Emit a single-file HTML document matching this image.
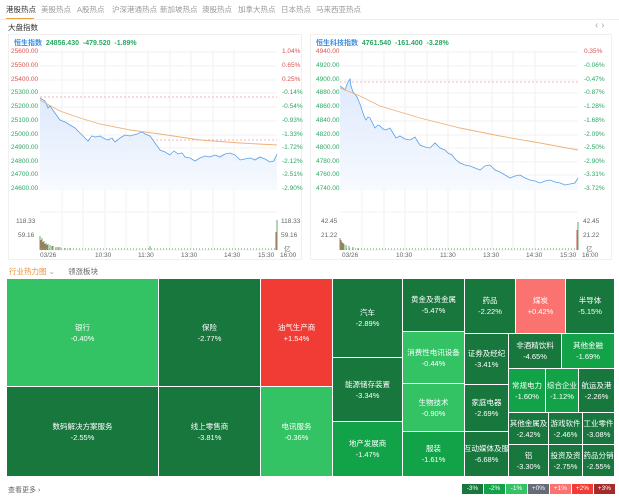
<!DOCTYPE html>
<html><head><meta charset="utf-8"><style>
*{margin:0;padding:0;box-sizing:border-box}
body{width:619px;height:500px;background:#fff;font-family:"Liberation Sans","Noto Sans CJK SC",sans-serif;position:relative;overflow:hidden;font-size:7px;color:#333}
.a{position:absolute;white-space:nowrap}
.nav span{position:absolute;top:4px;font-size:7.5px;color:#999}
.t{position:absolute;display:flex;flex-direction:column;align-items:center;justify-content:center;color:#fff;font-size:7.5px;line-height:11px;text-align:center;border-right:1px solid #fff;border-bottom:1px solid #fff;overflow:hidden;white-space:nowrap}
.D{background:#17773d}.M{background:#12a348}.L{background:#33c264}.R{background:#f03c34}.P{background:#fa7371}
.g{color:#2aa862}.r{color:#d9534f}.lbl{font-size:6.5px}
</style></head><body>
<div class="nav">
<span style="left:6px;color:#333">港股热点</span><span style="left:41px">美股热点</span><span style="left:77px">A股热点</span><span style="left:112px">沪深港通热点</span><span style="left:160px">新加坡热点</span><span style="left:202px">澳股热点</span><span style="left:238px">加拿大热点</span><span style="left:281px">日本热点</span><span style="left:316px">马来西亚热点</span>
</div>
<div class="a" style="left:6px;top:18px;width:28px;height:1px;background:#e8a040"></div>
<div class="a" style="left:0;top:19px;width:619px;height:1px;background:#eee"></div>
<div class="a" style="left:8px;top:22px;font-size:7.5px">大盘指数</div>
<div class="a" style="left:595px;top:20px;font-size:10px;color:#aaa">‹ ›</div>
<div class="a" style="left:8px;top:34px;width:294px;height:226px;border:1px solid #f0f0f0"></div>
<div class="a" style="left:310px;top:34px;width:302px;height:226px;border:1px solid #f0f0f0"></div>
<div class="a" style="left:14px;top:38px;font-size:7px;font-weight:bold"><span style="color:#3a8ee6">恒生指数</span> <span class="g">&nbsp;24856.430 &nbsp;-479.520 &nbsp;-1.89%</span></div>
<div class="a" style="left:316px;top:38px;font-size:7px;font-weight:bold"><span style="color:#3a8ee6">恒生科技指数</span> <span class="g">&nbsp;4761.540 &nbsp;-161.400 &nbsp;-3.28%</span></div>
<svg class="a" style="left:0;top:0" width="619" height="270">
<defs><linearGradient id="gr" x1="0" y1="0" x2="0" y2="1"><stop offset="0" stop-color="#dde9fb"/><stop offset="1" stop-color="#f7faff"/></linearGradient></defs>
<g stroke="#f2f2f2" stroke-width="1">
<path d="M40 52H277M40 66H277M40 80H277M40 93H277M40 107H277M40 121H277M40 135H277M40 148H277M40 162H277M40 175H277M40 189H277M40 212H277M40 250H277"/>
<path d="M62 50V250M83 50V250M105 50V250M126 50V250M148 50V250M170 50V250M191 50V250M213 50V250M234 50V250"/>
<path d="M340 52H578M340 66H578M340 80H578M340 93H578M340 107H578M340 121H578M340 135H578M340 148H578M340 162H578M340 175H578M340 189H578M340 212H578M340 250H578"/>
<path d="M362 50V250M384 50V250M405 50V250M427 50V250M448 50V250M470 50V250M492 50V250M513 50V250M535 50V250"/>
</g>
<path d="M40 97H277M40 140H277" stroke="#f0a0a0" stroke-dasharray="2,2" stroke-width=".7"/>
<path d="M40 98L50 106L60 120L70 125L80 133L88 141L95 137L100 136L108 140L115 142L120 138L125 135L137 134L145 134L150 136L155 143L160 150L170 155L178 154L185 157L195 161L205 156L215 155L230 153L240 160L250 158L260 157L270 162L277 154V189H40Z" fill="url(#gr)" stroke="none"/>
<polyline fill="none" stroke="#5aa0e8" stroke-width=".8" points="40,98 45,101 48,108 50,106 55,113 60,120 65,122 70,125 75,128 80,133 85,138 88,141 92,136 95,137 100,136 105,139 108,140 112,138 115,142 120,138 125,135 130,136 137,134 142,132 145,134 150,136 153,140 155,143 160,150 165,152 170,155 174,151 178,154 182,153 185,157 190,158 195,161 200,158 205,156 210,157 215,155 220,157 225,154 230,153 235,155 240,160 245,159 250,158 255,160 260,157 265,159 270,162 274,161 277,154"/>
<polyline fill="none" stroke="#eeb27a" stroke-width=".9" points="40,100 60,111 80,118 100,124 130,130 160,134 200,140 240,143 277,145"/>
<path d="M340 82H578" stroke="#f0a0a0" stroke-dasharray="2,2" stroke-width=".7"/>
<path d="M340 86L345 90L348 82L350 79L353 92L357 97L362 110L366 120L370 118L375 128L380 126L386 130L390 128L396 138L400 136L410 140L415 137L420 145L430 148L435 143L445 150L452 155L460 163L470 166L480 170L490 165L500 172L510 178L520 175L530 180L540 183L550 180L560 183L570 184L578 178V189H340Z" fill="url(#gr)" stroke="none"/>
<polyline fill="none" stroke="#5aa0e8" stroke-width=".8" points="340,86 343,88 345,90 347,84 348,82 350,79 351,86 353,92 355,94 357,97 360,104 362,110 364,116 366,120 368,117 370,118 373,124 375,128 378,125 380,126 383,129 386,130 390,128 393,133 396,138 400,136 405,139 410,140 415,137 418,142 420,145 425,147 430,148 435,143 440,148 445,150 448,153 452,155 456,160 460,163 465,165 470,166 475,168 480,170 485,166 490,165 495,170 500,172 505,175 510,178 515,176 520,175 525,178 530,180 535,181 540,183 545,181 550,180 555,182 560,183 565,185 570,184 575,183 578,178"/>
<polyline fill="none" stroke="#eeb27a" stroke-width=".9" points="340,88 360,96 380,106 420,118 460,128 500,136 540,143 578,150"/>
<path d="M40 250V236M42 250V238M44 250V241M46 250V243M48 250V244M50 250V245M53 250V246M56 250V247M60 250V247M65 250V248M70 250V248M150 250V246M277 250V220" stroke="#6a6" stroke-width="1"/>
<path d="M41 250V240M43 250V242M45 250V244M47 250V245M52 250V246M58 250V247M276 250V232" stroke="#c55" stroke-width="1"/>
<path d="M40 249H277M340 249H578" stroke="#7b7" stroke-width="1.2" stroke-dasharray="1,2"/>
<path d="M340 250V238M342 250V242M344 250V244M346 250V245M349 250V246M353 250V247M358 250V248M578 250V222" stroke="#6a6" stroke-width="1"/>
<path d="M341 250V240M343 250V243M577 250V230" stroke="#c55" stroke-width="1"/>
</svg>
<div class="lbl">
<div class="a r" style="left:11px;top:48px">25600.00</div><div class="a r" style="left:11px;top:62px">25500.00</div><div class="a r" style="left:11px;top:76px">25400.00</div>
<div class="a g" style="left:11px;top:89px">25300.00</div><div class="a g" style="left:11px;top:103px">25200.00</div><div class="a g" style="left:11px;top:117px">25100.00</div><div class="a g" style="left:11px;top:131px">25000.00</div><div class="a g" style="left:11px;top:144px">24900.00</div><div class="a g" style="left:11px;top:158px">24800.00</div><div class="a g" style="left:11px;top:171px">24700.00</div><div class="a g" style="left:11px;top:185px">24600.00</div>
<div class="a r" style="left:282px;top:48px">1.04%</div><div class="a r" style="left:282px;top:62px">0.65%</div><div class="a r" style="left:282px;top:76px">0.25%</div>
<div class="a g" style="left:282px;top:89px">-0.14%</div><div class="a g" style="left:282px;top:103px">-0.54%</div><div class="a g" style="left:282px;top:117px">-0.93%</div><div class="a g" style="left:282px;top:131px">-1.33%</div><div class="a g" style="left:282px;top:144px">-1.72%</div><div class="a g" style="left:282px;top:158px">-2.12%</div><div class="a g" style="left:282px;top:171px">-2.51%</div><div class="a g" style="left:282px;top:185px">-2.90%</div>
<div class="a r" style="left:316px;top:48px">4940.00</div><div class="a g" style="left:316px;top:62px">4920.00</div><div class="a g" style="left:316px;top:76px">4900.00</div><div class="a g" style="left:316px;top:89px">4880.00</div><div class="a g" style="left:316px;top:103px">4860.00</div><div class="a g" style="left:316px;top:117px">4840.00</div><div class="a g" style="left:316px;top:131px">4820.00</div><div class="a g" style="left:316px;top:144px">4800.00</div><div class="a g" style="left:316px;top:158px">4780.00</div><div class="a g" style="left:316px;top:171px">4760.00</div><div class="a g" style="left:316px;top:185px">4740.00</div>
<div class="a r" style="left:584px;top:48px">0.35%</div><div class="a g" style="left:584px;top:62px">-0.06%</div><div class="a g" style="left:584px;top:76px">-0.47%</div><div class="a g" style="left:584px;top:89px">-0.87%</div><div class="a g" style="left:584px;top:103px">-1.28%</div><div class="a g" style="left:584px;top:117px">-1.68%</div><div class="a g" style="left:584px;top:131px">-2.09%</div><div class="a g" style="left:584px;top:144px">-2.50%</div><div class="a g" style="left:584px;top:158px">-2.90%</div><div class="a g" style="left:584px;top:171px">-3.31%</div><div class="a g" style="left:584px;top:185px">-3.72%</div>
<div style="color:#666">
<div class="a" style="left:16px;top:218px">118.33</div><div class="a" style="left:18px;top:232px">59.16</div>
<div class="a" style="left:281px;top:218px">118.33</div><div class="a" style="left:281px;top:232px">59.16</div><div class="a" style="left:284px;top:243px">亿</div>
<div class="a" style="left:321px;top:218px">42.45</div><div class="a" style="left:321px;top:232px">21.22</div>
<div class="a" style="left:583px;top:218px">42.45</div><div class="a" style="left:583px;top:232px">21.22</div><div class="a" style="left:586px;top:243px">亿</div>
<div class="a" style="left:40px;top:252px">03/26</div><div class="a" style="left:95px;top:252px">10:30</div><div class="a" style="left:138px;top:252px">11:30</div><div class="a" style="left:181px;top:252px">13:30</div><div class="a" style="left:224px;top:252px">14:30</div><div class="a" style="left:258px;top:252px">15:30</div><div class="a" style="left:280px;top:252px">16:00</div>
<div class="a" style="left:342px;top:252px">03/26</div><div class="a" style="left:396px;top:252px">10:30</div><div class="a" style="left:440px;top:252px">11:30</div><div class="a" style="left:483px;top:252px">13:30</div><div class="a" style="left:526px;top:252px">14:30</div><div class="a" style="left:560px;top:252px">15:30</div><div class="a" style="left:582px;top:252px">16:00</div>
</div></div>
<div class="a" style="left:9px;top:266px;font-size:7.5px;color:#e8903a">行业热力图 <span style="color:#999">⌄</span></div>
<div class="a" style="left:68px;top:266px;font-size:7.5px;color:#666">领涨板块</div>
<div class="t L" style="left:7px;top:279px;width:152px;height:108px">银行<br>-0.40%</div>
<div class="t D" style="left:7px;top:387px;width:152px;height:90px">数码解决方案服务<br>-2.55%</div>
<div class="t D" style="left:159px;top:279px;width:102px;height:108px">保险<br>-2.77%</div>
<div class="t D" style="left:159px;top:387px;width:102px;height:90px">线上零售商<br>-3.81%</div>
<div class="t R" style="left:261px;top:279px;width:72px;height:108px">油气生产商<br>+1.54%</div>
<div class="t L" style="left:261px;top:387px;width:72px;height:90px">电讯服务<br>-0.36%</div>
<div class="t D" style="left:333px;top:279px;width:70px;height:79px">汽车<br>-2.89%</div>
<div class="t D" style="left:333px;top:358px;width:70px;height:64px">能源储存装置<br>-3.34%</div>
<div class="t M" style="left:333px;top:422px;width:70px;height:55px">地产发展商<br>-1.47%</div>
<div class="t D" style="left:403px;top:279px;width:62px;height:53px">黄金及贵金属<br>-5.47%</div>
<div class="t L" style="left:403px;top:332px;width:62px;height:52px">消费性电讯设备<br>-0.44%</div>
<div class="t L" style="left:403px;top:384px;width:62px;height:48px">生物技术<br>-0.90%</div>
<div class="t M" style="left:403px;top:432px;width:62px;height:45px">服装<br>-1.61%</div>
<div class="t D" style="left:465px;top:279px;width:51px;height:55px">药品<br>-2.22%</div>
<div class="t P" style="left:516px;top:279px;width:50px;height:55px">煤炭<br>+0.42%</div>
<div class="t D" style="left:566px;top:279px;width:49px;height:55px">半导体<br>-5.15%</div>
<div class="t D" style="left:465px;top:334px;width:44px;height:51px">证券及经纪<br>-3.41%</div>
<div class="t D" style="left:465px;top:385px;width:44px;height:47px">家庭电器<br>-2.69%</div>
<div class="t D" style="left:465px;top:432px;width:44px;height:45px">互动媒体及服<br>-6.68%</div>
<div class="t D" style="left:509px;top:334px;width:53px;height:35px">非酒精饮料<br>-4.65%</div>
<div class="t M" style="left:562px;top:334px;width:53px;height:35px">其他金融<br>-1.69%</div>
<div class="t M" style="left:509px;top:369px;width:37px;height:44px">常规电力<br>-1.60%</div>
<div class="t M" style="left:546px;top:369px;width:33px;height:44px">综合企业<br>-1.12%</div>
<div class="t D" style="left:579px;top:369px;width:36px;height:44px">航运及港<br>-2.26%</div>
<div class="t D" style="left:509px;top:413px;width:40px;height:32px">其他金属及<br>-2.42%</div>
<div class="t D" style="left:549px;top:413px;width:34px;height:32px">游戏软件<br>-2.46%</div>
<div class="t D" style="left:583px;top:413px;width:32px;height:32px">工业零件<br>-3.08%</div>
<div class="t D" style="left:509px;top:445px;width:40px;height:32px">铝<br>-3.30%</div>
<div class="t D" style="left:549px;top:445px;width:34px;height:32px">投资及资<br>-2.75%</div>
<div class="t D" style="left:583px;top:445px;width:32px;height:32px">药品分销<br>-2.55%</div>
<div class="a" style="left:8px;top:485px;font-size:7px;color:#666">查看更多 ›</div>
<div class="a" style="left:462px;top:484px;display:flex;font-size:6.5px;color:#fff;line-height:10px;text-align:center">
<span style="width:21px;background:#17773d">-3%</span><span style="width:21px;background:#12a348;margin-left:1px">-2%</span><span style="width:21px;background:#33c264;margin-left:1px">-1%</span><span style="width:21px;background:#666b78;margin-left:1px">+0%</span><span style="width:21px;background:#fa7371;margin-left:1px">+1%</span><span style="width:21px;background:#f03c34;margin-left:1px">+2%</span><span style="width:21px;background:#a52a2a;margin-left:1px">+3%</span>
</div>
</body></html>
